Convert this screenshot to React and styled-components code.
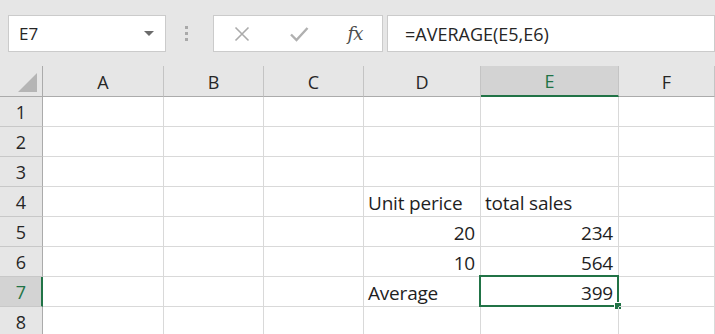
import React from "react";
import styled, { createGlobalStyle } from "styled-components";

const Global = createGlobalStyle`
  html, body { margin: 0; padding: 0; background: #ffffff; }
  body { font-family: "Open Sans", "Liberation Sans", Arial, sans-serif; overflow: hidden; }
`;

const Page = styled.div`
  width: 715px;
  height: 334px;
  display: flex;
  flex-direction: column;
  background: #ffffff;
  overflow: hidden;
`;

const Toolbar = styled.div`
  height: 66px;
  flex: none;
  background: #e6e6e6;
  display: flex;
  align-items: flex-start;
  padding: 15px 0 0 8px;
  box-sizing: border-box;
`;

const Box = styled.div`
  height: 37px;
  box-sizing: border-box;
  background: #ffffff;
  border: 1px solid #cbcbcb;
  display: flex;
  align-items: center;
  flex: ${(p) => (p.$grow ? "1" : "none")};
  width: ${(p) => (p.$w ? `${p.$w}px` : "auto")};
  margin-left: ${(p) => p.$ml || 0}px;
  padding-left: ${(p) => p.$pl || 0}px;
  font-family: "Open Sans", "Liberation Sans", sans-serif;
  font-size: ${(p) => p.$fs || 17}px;
  color: #262626;
`;

const NameText = styled.span`
  flex: 1;
`;

const Caret = styled.span`
  width: 0;
  height: 0;
  border-left: 5px solid transparent;
  border-right: 5px solid transparent;
  border-top: 5px solid #6b6b6b;
  margin-right: 11px;
`;

const Dots = styled.div`
  width: 4px;
  margin: 11px 0 0 19px;
  display: flex;
  flex-direction: column;
  gap: 3px;
  span {
    width: 3px;
    height: 3px;
    background: #a9a9a9;
    display: block;
  }
`;

const IconSlot = styled.div`
  width: ${(p) => p.$w}px;
  display: flex;
  align-items: center;
  justify-content: center;
  height: 100%;
`;

const Fx = styled.span`
  font-family: "DejaVu Serif", "Liberation Serif", serif;
  font-style: italic;
  font-size: 18px;
  color: #4d4d4d;
  letter-spacing: -1px;
`;

const Grid = styled.div`
  display: grid;
  grid-template-columns: 43px 121px 100px 100px 117px 138px 1fr;
  grid-auto-rows: 30px;
  grid-template-rows: 31px;
`;

const ColHead = styled.div`
  background: ${(p) => (p.$sel ? "#d3d3d3" : "#e6e6e6")};
  color: ${(p) => (p.$sel ? "#217346" : "#262626")};
  border-right: 1px solid #c4c4c4;
  border-bottom: ${(p) => (p.$sel ? "2px solid #217346" : "1px solid #ababab")};
  box-sizing: border-box;
  display: flex;
  align-items: center;
  justify-content: center;
  font-size: 18px;
  padding-top: 1px;
`;

const Corner = styled.div`
  background: #e6e6e6;
  border-right: 1px solid #ababab;
  border-bottom: 1px solid #ababab;
  box-sizing: border-box;
  display: flex;
  align-items: flex-end;
  justify-content: flex-end;
  padding: 0 5px 4px 0;
`;

const Triangle = styled.div`
  width: 0;
  height: 0;
  border-left: 19px solid transparent;
  border-bottom: 19px solid #b5b5b5;
`;

const RowHead = styled.div`
  background: ${(p) => (p.$sel ? "#d3d3d3" : "#e6e6e6")};
  color: ${(p) => (p.$sel ? "#217346" : "#262626")};
  border-right: ${(p) => (p.$sel ? "2px solid #217346" : "1px solid #ababab")};
  border-bottom: 1px solid #c8c8c8;
  box-sizing: border-box;
  display: flex;
  align-items: center;
  justify-content: center;
  font-size: 18px;
  padding-top: 1px;
  padding-left: ${(p) => (p.$sel ? "1px" : "0")};
`;

const Cell = styled.div`
  position: relative;
  border-right: 1px solid #d9d9d9;
  border-bottom: 1px solid #d9d9d9;
  box-sizing: border-box;
  display: flex;
  align-items: center;
  justify-content: ${(p) => (p.$num ? "flex-end" : "flex-start")};
  padding: 2px ${(p) => (p.$num ? "5px" : "0")} 0 ${(p) => (p.$num ? "0" : "4px")};
  font-size: 19px;
  letter-spacing: -0.2px;
  color: #1f1f1f;
  white-space: nowrap;
`;

const Selection = styled.div`
  position: absolute;
  left: -2px;
  top: -2px;
  right: -1px;
  bottom: -1px;
  border: 2px solid #217346;
  pointer-events: none;
`;

const Handle = styled.div`
  position: absolute;
  right: -4px;
  bottom: -4px;
  width: 6px;
  height: 6px;
  background: #217346;
  border: 1px solid #ffffff;
  box-sizing: content-box;
  margin: -1px;
`;

const cols = ["A", "B", "C", "D", "E", "F"];

const data = {
  4: { D: { v: "Unit perice" }, E: { v: "total sales" } },
  5: { D: { v: "20", num: true }, E: { v: "234", num: true } },
  6: { D: { v: "10", num: true }, E: { v: "564", num: true } },
  7: { D: { v: "Average" }, E: { v: "399", num: true, sel: true } },
};

export default function App() {
  return (
    <Page>
      <Global />
      <Toolbar>
        <Box $w={158} $pl={10}>
          <NameText>E7</NameText>
          <Caret />
        </Box>
        <Dots>
          <span />
          <span />
          <span />
        </Dots>
        <Box $w={170} $ml={24}>
          <IconSlot $w={56}>
            <svg width="16" height="16" viewBox="0 0 16 16">
              <path d="M1.5 1.5 L14.5 14.5 M14.5 1.5 L1.5 14.5" stroke="#ababab" strokeWidth="1.6" fill="none" />
            </svg>
          </IconSlot>
          <IconSlot $w={58}>
            <svg width="20" height="16" viewBox="0 0 20 16">
              <path d="M2 8.5 L7.5 14 L18.5 2" stroke="#b0b0b0" strokeWidth="2.4" fill="none" />
            </svg>
          </IconSlot>
          <IconSlot $w={54}>
            <Fx>fx</Fx>
          </IconSlot>
        </Box>
        <Box $grow $ml={4} $pl={17} $fs={18}>
          =AVERAGE(E5,E6)
        </Box>
      </Toolbar>
      <Grid>
        <Corner>
          <Triangle />
        </Corner>
        {cols.map((c) => (
          <ColHead key={c} $sel={c === "E"}>
            {c}
          </ColHead>
        ))}
        {[1, 2, 3, 4, 5, 6, 7, 8].map((r) => (
          <React.Fragment key={r}>
            <RowHead $sel={r === 7}>{r}</RowHead>
            {cols.map((c) => {
              const d = (data[r] && data[r][c]) || null;
              return (
                <Cell key={c} $num={d && d.num}>
                  {d ? d.v : ""}
                  {d && d.sel && (
                    <Selection>
                      <Handle />
                    </Selection>
                  )}
                </Cell>
              );
            })}
          </React.Fragment>
        ))}
      </Grid>
    </Page>
  );
}
